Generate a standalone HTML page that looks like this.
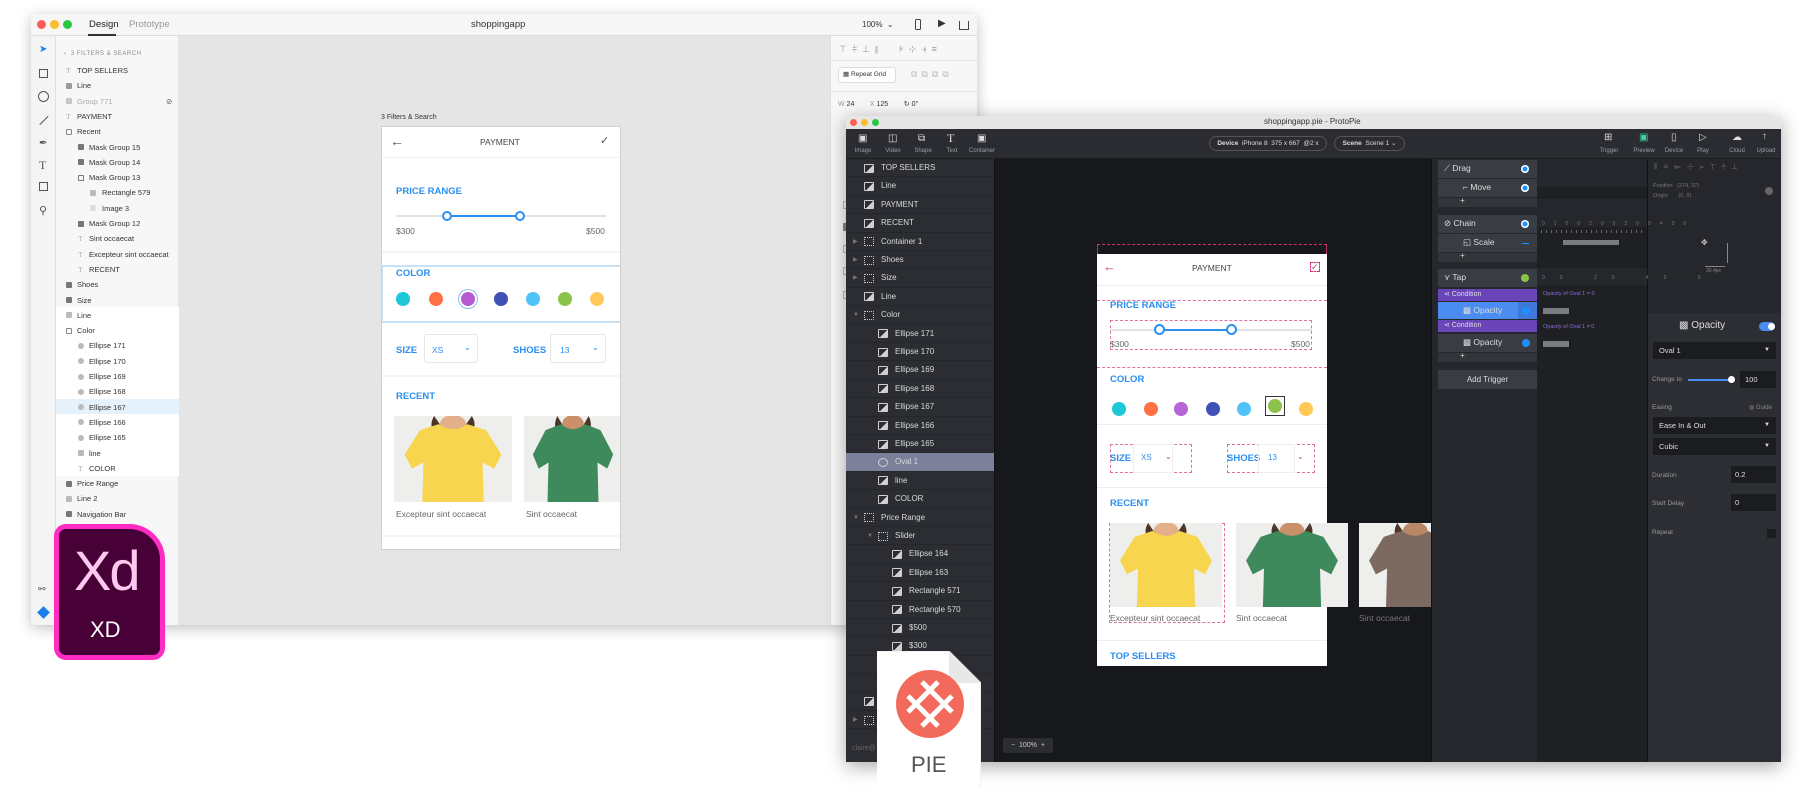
<!DOCTYPE html>
<html><head><meta charset="utf-8"><style>
*{box-sizing:border-box;margin:0;padding:0}
body{width:1812px;height:808px;background:#fff;position:relative;overflow:hidden;font-family:"Liberation Sans",sans-serif}
.a{position:absolute}
.t{position:absolute;white-space:nowrap}
.xl{position:absolute;left:0;width:123px;height:15.3px;font-size:7.5px;color:#333;line-height:15.3px}
.xl i{position:absolute;top:4.5px;width:6px;height:6px;background:#9a9a9a;border-radius:1px}
.pl{position:absolute;left:0;width:148px;height:18.4px;font-size:8px;color:#d8d9dc;line-height:18.4px;border-bottom:1px solid #24262b}
.pl i{position:absolute;top:4.5px;width:10px;height:9px;border:1.3px solid #d0d0d0;border-radius:1px;background:linear-gradient(135deg,transparent 55%,#d0d0d0 55%)}
.ar{position:absolute;top:0;font-size:6px;color:#777}
.h{color:#2a8ff0;font-weight:bold;font-size:9.5px}
.dot{position:absolute;width:14px;height:14px;border-radius:50%}
.ib{position:absolute;font-size:6px;color:#9a9ca3;text-align:center;width:30px}
.row{position:absolute;left:1438px;width:99px;background:#3a3c43;font-size:8.5px;color:#ddd}
</style></head><body>

<!-- XD window -->
<div class="a" style="left:31px;top:14px;width:946px;height:611px;background:#e5e5e5;box-shadow:0 3px 14px rgba(0,0,0,.25);border-radius:4px;overflow:hidden">
 <div class="a" style="left:0;top:0;width:946px;height:22px;background:#f6f6f6;border-bottom:1px solid #ddd"></div>
 <div class="a" style="left:6px;top:6px;width:9px;height:9px;border-radius:50%;background:#fc5f57"></div>
 <div class="a" style="left:19px;top:6px;width:9px;height:9px;border-radius:50%;background:#fdbc2e"></div>
 <div class="a" style="left:32px;top:6px;width:9px;height:9px;border-radius:50%;background:#28c840"></div>
 <div class="t" style="left:58px;top:5px;font-size:9.5px;color:#222">Design</div>
 <div class="a" style="left:57px;top:20px;width:28px;height:2px;background:#333"></div>
 <div class="t" style="left:98px;top:5px;font-size:9.5px;color:#999">Prototype</div>
 <div class="t" style="left:440px;top:5px;font-size:9.5px;color:#333">shoppingapp</div>
 <div class="t" style="left:831px;top:6px;font-size:8px;color:#333">100% &nbsp;⌄</div>
 <div class="a" style="left:884px;top:5px;width:6px;height:11px;border:1.3px solid #444;border-radius:1.5px"></div>
 <div class="t" style="left:907px;top:4px;font-size:10px;color:#333">▶</div>
 <div class="a" style="left:928px;top:7px;width:10px;height:9px;border:1.3px solid #444;border-top:none"></div>
 <!-- left tools -->
 <div class="a" style="left:0;top:22px;width:25px;height:589px;background:#f4f4f4;border-right:1px solid #e0e0e0"></div>
 <div class="t" style="left:8px;top:30px;font-size:10px;color:#1a7fe8">➤</div>
 <div class="a" style="left:8px;top:55px;width:9px;height:9px;border:1.2px solid #555"></div>
 <div class="a" style="left:7px;top:77px;width:11px;height:11px;border:1.2px solid #555;border-radius:50%"></div>
 <div class="a" style="left:7px;top:106px;width:12px;height:1.2px;background:#555;transform:rotate(-45deg)"></div>
 <div class="t" style="left:8px;top:124px;font-size:10px;color:#555">✒</div>
 <div class="t" style="left:8px;top:144px;font-size:12px;color:#555;font-family:'Liberation Serif'">T</div>
 <div class="a" style="left:8px;top:168px;width:9px;height:9px;border:1.2px solid #555"></div>
 <div class="t" style="left:8px;top:190px;font-size:11px;color:#555">⚲</div>
 <div class="t" style="left:7px;top:570px;font-size:9px;color:#555">⚯</div>
 <div class="a" style="left:8px;top:594px;width:9px;height:9px;background:#1a7fe8;transform:rotate(45deg)"></div>
 <!-- layers -->
 <div class="a" style="left:25px;top:22px;width:123px;height:589px;background:#f7f7f7;border-right:1px solid #e3e3e3">
  <div class="t" style="left:8px;top:15px;font-size:6px;color:#888;letter-spacing:.5px">‹ &nbsp;3 FILTERS &amp; SEARCH</div>
  <div class="a" style="left:0;top:271px;width:123px;height:169px;background:#fff"></div>
  <div class="a" style="left:0;top:363px;width:123px;height:15px;background:#e5f1fb"></div>
  <div style="position:absolute;left:0;top:27px">
   <div class="xl" style="top:0"><span style="position:absolute;left:10px;color:#aaa;font-family:'Liberation Serif'">T</span><span style="position:absolute;left:21px">TOP SELLERS</span></div>
   <div class="xl" style="top:15.3px"><i style="left:10px"></i><span style="position:absolute;left:21px">Line</span></div>
   <div class="xl" style="top:30.6px;color:#aaa"><i style="left:10px;background:#c6c6c6"></i><span style="position:absolute;left:21px">Group 771</span><span style="position:absolute;left:110px;color:#555">⊘</span></div>
   <div class="xl" style="top:45.9px"><span style="position:absolute;left:10px;color:#aaa;font-family:'Liberation Serif'">T</span><span style="position:absolute;left:21px">PAYMENT</span></div>
   <div class="xl" style="top:61.2px"><i style="left:10px;background:none;border:1px solid #888"></i><span style="position:absolute;left:21px">Recent</span></div>
   <div class="xl" style="top:76.5px"><i style="left:22px;background:#777"></i><span style="position:absolute;left:33px">Mask Group 15</span></div>
   <div class="xl" style="top:91.8px"><i style="left:22px;background:#777"></i><span style="position:absolute;left:33px">Mask Group 14</span></div>
   <div class="xl" style="top:107.1px"><i style="left:22px;background:none;border:1px solid #777"></i><span style="position:absolute;left:33px">Mask Group 13</span></div>
   <div class="xl" style="top:122.4px"><i style="left:34px;background:#bbb"></i><span style="position:absolute;left:46px">Rectangle 579</span></div>
   <div class="xl" style="top:137.7px"><i style="left:34px;background:#ddd"></i><span style="position:absolute;left:46px">Image 3</span></div>
   <div class="xl" style="top:153px"><i style="left:22px;background:#777"></i><span style="position:absolute;left:33px">Mask Group 12</span></div>
   <div class="xl" style="top:168.3px"><span style="position:absolute;left:22px;color:#aaa;font-family:'Liberation Serif'">T</span><span style="position:absolute;left:33px">Sint occaecat</span></div>
   <div class="xl" style="top:183.6px"><span style="position:absolute;left:22px;color:#aaa;font-family:'Liberation Serif'">T</span><span style="position:absolute;left:33px">Excepteur sint occaecat</span></div>
   <div class="xl" style="top:198.9px"><span style="position:absolute;left:22px;color:#aaa;font-family:'Liberation Serif'">T</span><span style="position:absolute;left:33px">RECENT</span></div>
   <div class="xl" style="top:214.2px"><i style="left:10px;background:#777"></i><span style="position:absolute;left:21px">Shoes</span></div>
   <div class="xl" style="top:229.5px"><i style="left:10px;background:#777"></i><span style="position:absolute;left:21px">Size</span></div>
   <div class="xl" style="top:244.8px"><i style="left:10px;background:#bbb"></i><span style="position:absolute;left:21px">Line</span></div>
   <div class="xl" style="top:260.1px"><i style="left:10px;background:none;border:1px solid #888"></i><span style="position:absolute;left:21px">Color</span></div>
   <div class="xl" style="top:275.4px"><i style="left:22px;border-radius:50%;background:#bbb"></i><span style="position:absolute;left:33px">Ellipse 171</span></div>
   <div class="xl" style="top:290.7px"><i style="left:22px;border-radius:50%;background:#bbb"></i><span style="position:absolute;left:33px">Ellipse 170</span></div>
   <div class="xl" style="top:306px"><i style="left:22px;border-radius:50%;background:#bbb"></i><span style="position:absolute;left:33px">Ellipse 169</span></div>
   <div class="xl" style="top:321.3px"><i style="left:22px;border-radius:50%;background:#bbb"></i><span style="position:absolute;left:33px">Ellipse 168</span></div>
   <div class="xl" style="top:336.6px"><i style="left:22px;border-radius:50%;background:#bbb"></i><span style="position:absolute;left:33px">Ellipse 167</span></div>
   <div class="xl" style="top:351.9px"><i style="left:22px;border-radius:50%;background:#bbb"></i><span style="position:absolute;left:33px">Ellipse 166</span></div>
   <div class="xl" style="top:367.2px"><i style="left:22px;border-radius:50%;background:#bbb"></i><span style="position:absolute;left:33px">Ellipse 165</span></div>
   <div class="xl" style="top:382.5px"><i style="left:22px;background:#bbb"></i><span style="position:absolute;left:33px">line</span></div>
   <div class="xl" style="top:397.8px"><span style="position:absolute;left:22px;color:#aaa;font-family:'Liberation Serif'">T</span><span style="position:absolute;left:33px">COLOR</span></div>
   <div class="xl" style="top:413.1px"><i style="left:10px;background:#777"></i><span style="position:absolute;left:21px">Price Range</span></div>
   <div class="xl" style="top:428.4px"><i style="left:10px;background:#bbb"></i><span style="position:absolute;left:21px">Line 2</span></div>
   <div class="xl" style="top:443.7px"><i style="left:10px;background:#777"></i><span style="position:absolute;left:21px">Navigation Bar</span></div>
  </div>
 </div>
 <!-- right panel -->
 <div class="a" style="left:799px;top:22px;width:147px;height:589px;background:#f7f7f7;border-left:1px solid #e0e0e0">
  <div class="t" style="left:8px;top:8px;font-size:9px;color:#999;letter-spacing:5px">⊤⫩⊥⫴</div>
  <div class="t" style="left:68px;top:8px;font-size:9px;color:#999;letter-spacing:5px">⊧⊹⫣≡</div>
  <div class="a" style="left:0;top:24px;width:147px;height:1px;background:#e3e3e3"></div>
  <div class="a" style="left:7px;top:31px;width:58px;height:16px;background:#fff;border:1px solid #ddd;border-radius:3px;font-size:6.5px;color:#333;line-height:14px;padding-left:4px">▦ Repeat Grid</div>
  <div class="t" style="left:80px;top:33px;font-size:9px;color:#bbb;letter-spacing:4px">⧉⧉⧉⧉</div>
  <div class="a" style="left:0;top:55px;width:147px;height:1px;background:#e3e3e3"></div>
  <div class="t" style="left:7px;top:64px;font-size:7px;color:#333"><span style="color:#999">W</span> 24 &nbsp;&nbsp;&nbsp;&nbsp;&nbsp;&nbsp;&nbsp;<span style="color:#999">X</span> 125 &nbsp;&nbsp;&nbsp;&nbsp;&nbsp;&nbsp;&nbsp;↻ 0°</div>
  <div class="a" style="left:12px;top:165px;width:8px;height:8px;border:1px solid #bbb"></div>
  <div class="a" style="left:12px;top:187px;width:8px;height:8px;background:#888"></div>
  <div class="a" style="left:12px;top:209px;width:8px;height:8px;border:1px solid #bbb"></div>
  <div class="a" style="left:12px;top:231px;width:8px;height:8px;border:1px solid #bbb"></div>
  <div class="a" style="left:12px;top:255px;width:8px;height:8px;border:1px solid #bbb"></div>
 </div>
 <!-- artboard -->
 <div class="t" style="left:350px;top:100px;font-size:7px;color:#333">3 Filters &amp; Search</div>
 <div class="a" style="left:350px;top:112px;width:240px;height:424px;background:#fff;border:1px solid #d0d0d0;overflow:hidden">
  <div class="t" style="left:8px;top:6px;font-size:14px;color:#555">←</div>
  <div class="t" style="left:98px;top:10px;font-size:8.5px;color:#444">PAYMENT</div>
  <div class="t" style="left:218px;top:7px;font-size:11px;color:#555">✓</div>
  <div class="a" style="left:0;top:30px;width:240px;height:1px;background:#f0f0f0"></div>
  <div class="t h" style="left:14px;top:59px">PRICE RANGE</div>
  <div class="a" style="left:14px;top:88px;width:210px;height:2px;background:#dfe3e6"></div>
  <div class="a" style="left:64px;top:88px;width:74px;height:2px;background:#2a8ff0"></div>
  <div class="a" style="left:60px;top:84px;width:10px;height:10px;border:2px solid #2a8ff0;border-radius:50%;background:#fff"></div>
  <div class="a" style="left:133px;top:84px;width:10px;height:10px;border:2px solid #2a8ff0;border-radius:50%;background:#fff"></div>
  <div class="t" style="left:14px;top:99px;font-size:8.5px;color:#666">$300</div>
  <div class="t" style="left:204px;top:99px;font-size:8.5px;color:#666">$500</div>
  <div class="a" style="left:0;top:124px;width:240px;height:2px;background:#f5f5f5"></div>
  <div class="a" style="left:-1px;top:138px;width:241px;height:58px;border:2px solid #c9e1f5"></div>
  <div class="t h" style="left:14px;top:141px">COLOR</div>
  <div class="dot" style="left:14px;top:165px;background:#1ec8d8"></div>
  <div class="dot" style="left:47px;top:165px;background:#ff7043"></div>
  <div class="dot" style="left:79px;top:165px;background:#b55bd0;box-shadow:0 0 0 2px #fff,0 0 0 3px #8db8e8"></div>
  <div class="dot" style="left:112px;top:165px;background:#3f51b5"></div>
  <div class="dot" style="left:144px;top:165px;background:#4fc3f7"></div>
  <div class="dot" style="left:176px;top:165px;background:#8bc34a"></div>
  <div class="dot" style="left:208px;top:165px;background:#ffc857"></div>
  <div class="t h" style="left:14px;top:218px">SIZE</div>
  <div class="a" style="left:42px;top:207px;width:54px;height:29px;border:1px solid #e6e6e6;border-radius:3px"></div>
  <div class="t" style="left:50px;top:218px;font-size:8.5px;color:#2a8ff0">XS</div>
  <div class="t" style="left:82px;top:216px;font-size:8px;color:#2a8ff0">⌄</div>
  <div class="t h" style="left:131px;top:218px">SHOES</div>
  <div class="a" style="left:168px;top:207px;width:56px;height:29px;border:1px solid #e6e6e6;border-radius:3px"></div>
  <div class="t" style="left:178px;top:218px;font-size:8.5px;color:#2a8ff0">13</div>
  <div class="t" style="left:210px;top:216px;font-size:8px;color:#2a8ff0">⌄</div>
  <div class="a" style="left:0;top:248px;width:240px;height:2px;background:#f5f5f5"></div>
  <div class="t h" style="left:14px;top:264px">RECENT</div>
  <svg class="a" style="left:12px;top:289px" width="118" height="86" viewBox="0 0 100 85" preserveAspectRatio="none"><rect width="100" height="85" fill="#eeeeec"/><path d="M34 0 Q30 8 33 14 L40 10Z M66 0 Q70 8 67 14 L60 10Z" fill="#4a3527"/><ellipse cx="50" cy="8" rx="11" ry="9" fill="#e3b08a"/><path d="M24 85 L25 46 L15 52 L9 38 L22 14 L38 8 Q50 18 62 8 L78 14 L91 38 L85 52 L75 46 L76 85Z" fill="#f7d54e"/></svg>
  <svg class="a" style="left:142px;top:289px" width="98" height="86" viewBox="0 0 100 85" preserveAspectRatio="none"><rect width="100" height="85" fill="#eeeeec"/><path d="M34 0 Q30 8 33 14 L40 10Z M66 0 Q70 8 67 14 L60 10Z" fill="#4a3527"/><ellipse cx="50" cy="8" rx="11" ry="9" fill="#c9906a"/><path d="M24 85 L25 46 L15 52 L9 38 L22 14 L38 8 Q50 18 62 8 L78 14 L91 38 L85 52 L75 46 L76 85Z" fill="#3f8a5c"/></svg>
  <div class="t" style="left:14px;top:382px;font-size:8.5px;color:#666">Excepteur sint occaecat</div>
  <div class="t" style="left:144px;top:382px;font-size:8.5px;color:#666">Sint occaecat</div>
  <div class="a" style="left:0;top:408px;width:240px;height:2px;background:#f5f5f5"></div>
  <div class="t h" style="left:14px;top:422px">TOP SELLERS</div>
 </div>
</div>

<!-- XD logo -->
<div class="a" style="left:54px;top:524px;width:111px;height:136px;background:#470137;border:5px solid #ff2bc2;border-radius:12px 36px 12px 12px"></div>
<div class="t" style="left:74px;top:538px;font-size:56px;color:#ffc8ef;letter-spacing:-2px">Xd</div>
<div class="t" style="left:90px;top:617px;font-size:22px;color:#fff">XD</div>

<!-- ProtoPie window -->
<div class="a" style="left:846px;top:116px;width:935px;height:646px;background:#17181c;box-shadow:0 4px 18px rgba(0,0,0,.35);overflow:hidden">
 <div class="a" style="left:0;top:0;width:935px;height:13px;background:#e6e6e6"></div>
 <div class="a" style="left:4px;top:3px;width:7px;height:7px;border-radius:50%;background:#fc5f57"></div>
 <div class="a" style="left:15px;top:3px;width:7px;height:7px;border-radius:50%;background:#fdbc2e"></div>
 <div class="a" style="left:26px;top:3px;width:7px;height:7px;border-radius:50%;background:#28c840"></div>
 <div class="t" style="left:418px;top:1px;font-size:8px;color:#333">shoppingapp.pie - ProtoPie</div>
 <div class="a" style="left:0;top:13px;width:935px;height:30px;background:#2a2c31;border-bottom:1px solid #1a1b1f"></div>
 <div class="t" style="left:12px;top:17px;font-size:10px;color:#ddd">▣</div><div class="ib" style="left:2px;top:32px">Image</div>
 <div class="t" style="left:42px;top:17px;font-size:10px;color:#ddd">◫</div><div class="ib" style="left:32px;top:32px">Video</div>
 <div class="t" style="left:72px;top:17px;font-size:10px;color:#ddd">⧉</div><div class="ib" style="left:62px;top:32px">Shape</div>
 <div class="t" style="left:101px;top:15px;font-size:12px;color:#ddd;font-family:'Liberation Serif'">T</div><div class="ib" style="left:91px;top:32px">Text</div>
 <div class="t" style="left:131px;top:17px;font-size:10px;color:#ddd">▣</div><div class="ib" style="left:121px;top:32px">Container</div>
 <div class="a" style="left:363px;top:20px;width:118px;height:15px;border:1px solid #555;border-radius:8px;font-size:6.5px;color:#ddd;line-height:13px;text-align:center"><b>Device</b>&nbsp; iPhone 8 &nbsp;375 x 667 &nbsp;@2 x</div>
 <div class="a" style="left:488px;top:20px;width:71px;height:15px;border:1px solid #555;border-radius:8px;font-size:6.5px;color:#ddd;line-height:13px;text-align:center"><b>Scene</b>&nbsp; Scene 1 ⌄</div>
 <div class="t" style="left:758px;top:16px;font-size:10px;color:#ddd">⊞</div><div class="ib" style="left:748px;top:32px">Trigger</div>
 <div class="t" style="left:793px;top:16px;font-size:10px;color:#3ed6a0">▣</div><div class="ib" style="left:783px;top:32px">Preview</div>
 <div class="t" style="left:825px;top:16px;font-size:10px;color:#ddd">▯</div><div class="ib" style="left:813px;top:32px">Device</div>
 <div class="t" style="left:853px;top:16px;font-size:10px;color:#ddd">▷</div><div class="ib" style="left:842px;top:32px">Play</div>
 <div class="t" style="left:886px;top:16px;font-size:10px;color:#ddd">☁</div><div class="ib" style="left:876px;top:32px">Cloud</div>
 <div class="t" style="left:916px;top:15px;font-size:10px;color:#ddd">↑</div><div class="ib" style="left:905px;top:32px">Upload</div>
 <!-- left layers -->
 <div class="a" style="left:0;top:43px;width:148px;height:603px;background:#2b2d32">
  <div class="pl" style="top:0"><i style="left:18px"></i><span style="position:absolute;left:35px">TOP SELLERS</span></div>
  <div class="pl" style="top:18.4px"><i style="left:18px"></i><span style="position:absolute;left:35px">Line</span></div>
  <div class="pl" style="top:36.8px"><i style="left:18px"></i><span style="position:absolute;left:35px">PAYMENT</span></div>
  <div class="pl" style="top:55.2px"><i style="left:18px"></i><span style="position:absolute;left:35px">RECENT</span></div>
  <div class="pl" style="top:73.6px"><span class="ar" style="left:7px">▶</span><i style="left:18px;background:none;border-style:dotted"></i><span style="position:absolute;left:35px">Container 1</span></div>
  <div class="pl" style="top:92px"><span class="ar" style="left:7px">▶</span><i style="left:18px;background:none;border-style:dotted"></i><span style="position:absolute;left:35px">Shoes</span></div>
  <div class="pl" style="top:110.4px"><span class="ar" style="left:7px">▶</span><i style="left:18px;background:none;border-style:dotted"></i><span style="position:absolute;left:35px">Size</span></div>
  <div class="pl" style="top:128.8px"><i style="left:18px"></i><span style="position:absolute;left:35px">Line</span></div>
  <div class="pl" style="top:147.2px"><span class="ar" style="left:7px">▼</span><i style="left:18px;background:none;border-style:dotted"></i><span style="position:absolute;left:35px">Color</span></div>
  <div class="pl" style="top:165.6px"><i style="left:32px"></i><span style="position:absolute;left:49px">Ellipse 171</span></div>
  <div class="pl" style="top:184px"><i style="left:32px"></i><span style="position:absolute;left:49px">Ellipse 170</span></div>
  <div class="pl" style="top:202.4px"><i style="left:32px"></i><span style="position:absolute;left:49px">Ellipse 169</span></div>
  <div class="pl" style="top:220.8px"><i style="left:32px"></i><span style="position:absolute;left:49px">Ellipse 168</span></div>
  <div class="pl" style="top:239.2px"><i style="left:32px"></i><span style="position:absolute;left:49px">Ellipse 167</span></div>
  <div class="pl" style="top:257.6px"><i style="left:32px"></i><span style="position:absolute;left:49px">Ellipse 166</span></div>
  <div class="pl" style="top:276px"><i style="left:32px"></i><span style="position:absolute;left:49px">Ellipse 165</span></div>
  <div class="pl" style="top:294.4px;background:#7c809a"><i style="left:32px;border-radius:50%;background:none"></i><span style="position:absolute;left:49px">Oval 1</span></div>
  <div class="pl" style="top:312.8px"><i style="left:32px"></i><span style="position:absolute;left:49px">line</span></div>
  <div class="pl" style="top:331.2px"><i style="left:32px"></i><span style="position:absolute;left:49px">COLOR</span></div>
  <div class="pl" style="top:349.6px"><span class="ar" style="left:7px">▼</span><i style="left:18px;background:none;border-style:dotted"></i><span style="position:absolute;left:35px">Price Range</span></div>
  <div class="pl" style="top:368px"><span class="ar" style="left:21px">▼</span><i style="left:32px;background:none;border-style:dotted"></i><span style="position:absolute;left:49px">Slider</span></div>
  <div class="pl" style="top:386.4px"><i style="left:46px"></i><span style="position:absolute;left:63px">Ellipse 164</span></div>
  <div class="pl" style="top:404.8px"><i style="left:46px"></i><span style="position:absolute;left:63px">Ellipse 163</span></div>
  <div class="pl" style="top:423.2px"><i style="left:46px"></i><span style="position:absolute;left:63px">Rectangle 571</span></div>
  <div class="pl" style="top:441.6px"><i style="left:46px"></i><span style="position:absolute;left:63px">Rectangle 570</span></div>
  <div class="pl" style="top:460px"><i style="left:46px"></i><span style="position:absolute;left:63px">$500</span></div>
  <div class="pl" style="top:478.4px"><i style="left:46px"></i><span style="position:absolute;left:63px">$300</span></div>
  <div class="pl" style="top:496.8px"></div>
  <div class="pl" style="top:515.2px"></div>
  <div class="pl" style="top:533.6px"><i style="left:18px"></i></div>
  <div class="pl" style="top:552px"><span class="ar" style="left:7px">▶</span><i style="left:18px;background:none;border-style:dotted"></i></div>
  <div class="t" style="left:6px;top:586px;font-size:7px;color:#666">claire@</div>
 </div>
 <div class="a" style="left:148px;top:43px;width:1px;height:603px;background:#111"></div>
 <!-- zoom ctrl -->
 <div class="a" style="left:157px;top:622px;width:50px;height:15px;background:#2b2d32;border-radius:2px;font-size:7px;color:#ccc;line-height:15px;text-align:center">− &nbsp;100% &nbsp;+</div>
 <!-- phone -->
 <div class="a" style="left:251px;top:128px;width:230px;height:10px;border:1px dashed #d0307a;border-bottom:none"></div>
 <div class="a" style="left:251px;top:138px;width:230px;height:412px;background:#fff;overflow:hidden">
  <div class="t" style="left:6px;top:5px;font-size:13px;color:#c04070">←</div>
  <div class="t" style="left:95px;top:9px;font-size:8.5px;color:#444">PAYMENT</div>
  <div class="a" style="left:213px;top:8px;width:10px;height:10px;border:1px dashed #d0307a;font-size:9px;color:#c04070;line-height:8px">✓</div>
  <div class="a" style="left:0;top:31px;width:230px;height:1px;background:#eee"></div>
  <div class="a" style="left:0;top:46px;width:230px;height:1px;border-top:1px dashed #e070a0"></div>
  <div class="t h" style="left:13px;top:46px">PRICE RANGE</div>
  <div class="a" style="left:13px;top:66px;width:202px;height:30px;border:1px dashed #e070a0"></div>
  <div class="a" style="left:13px;top:75px;width:202px;height:2px;background:#dfe3e6"></div>
  <div class="a" style="left:62px;top:75px;width:72px;height:2px;background:#2a8ff0"></div>
  <div class="a" style="left:57px;top:70px;width:11px;height:11px;border:2px solid #2a8ff0;border-radius:50%;background:#fff"></div>
  <div class="a" style="left:129px;top:70px;width:11px;height:11px;border:2px solid #2a8ff0;border-radius:50%;background:#fff"></div>
  <div class="t" style="left:13px;top:85px;font-size:8.5px;color:#666">$300</div>
  <div class="t" style="left:194px;top:85px;font-size:8.5px;color:#666">$500</div>
  <div class="a" style="left:0;top:113px;width:230px;height:1px;border-top:1px dashed #e070a0"></div>
  <div class="t h" style="left:13px;top:120px">COLOR</div>
  <div class="dot" style="left:15px;top:148px;background:#1ec8d8"></div>
  <div class="dot" style="left:47px;top:148px;background:#ff7043"></div>
  <div class="dot" style="left:77px;top:148px;background:#b565d6"></div>
  <div class="dot" style="left:109px;top:148px;background:#3f51b5"></div>
  <div class="dot" style="left:140px;top:148px;background:#4fc3f7"></div>
  <div class="a" style="left:168px;top:142px;width:20px;height:20px;border:1.5px solid #333"></div>
  <div class="dot" style="left:171px;top:145px;background:#8bc34a"></div>
  <div class="dot" style="left:202px;top:148px;background:#ffc857"></div>
  <div class="a" style="left:0;top:170px;width:230px;height:1px;background:#eee"></div>
  <div class="a" style="left:13px;top:190px;width:82px;height:29px;border:1px dashed #e070a0"></div>
  <div class="t h" style="left:13px;top:199px">SIZE</div>
  <div class="a" style="left:36px;top:190px;width:40px;height:29px;border:1px solid #eee"></div>
  <div class="t" style="left:44px;top:199px;font-size:8px;color:#2a8ff0">XS</div>
  <div class="t" style="left:68px;top:198px;font-size:8px;color:#c04070">⌄</div>
  <div class="a" style="left:130px;top:190px;width:88px;height:29px;border:1px dashed #e070a0"></div>
  <div class="t h" style="left:130px;top:199px">SHOES</div>
  <div class="a" style="left:161px;top:190px;width:37px;height:29px;border:1px solid #eee"></div>
  <div class="t" style="left:171px;top:199px;font-size:8px;color:#2a8ff0">13</div>
  <div class="t" style="left:200px;top:198px;font-size:8px;color:#c04070">⌄</div>
  <div class="a" style="left:0;top:233px;width:230px;height:1px;background:#eee"></div>
  <div class="t h" style="left:13px;top:244px">RECENT</div>
  <div class="a" style="left:12px;top:269px;width:116px;height:100px;border:1px dashed #e070a0"></div>
  <svg class="a" style="left:13px;top:269px" width="112" height="84" viewBox="0 0 100 85" preserveAspectRatio="none"><rect width="100" height="85" fill="#eeeeec"/><path d="M34 0 Q30 8 33 14 L40 10Z M66 0 Q70 8 67 14 L60 10Z" fill="#4a3527"/><ellipse cx="50" cy="8" rx="11" ry="9" fill="#e3b08a"/><path d="M24 85 L25 46 L15 52 L9 38 L22 14 L38 8 Q50 18 62 8 L78 14 L91 38 L85 52 L75 46 L76 85Z" fill="#f7d54e"/></svg>
  <div class="t" style="left:13px;top:359px;font-size:8.5px;color:#666">Excepteur sint occaecat</div>
  <div class="t" style="left:139px;top:359px;font-size:8.5px;color:#666">Sint occaecat</div>
  <div class="a" style="left:0;top:386px;width:230px;height:1px;background:#eee"></div>
  <div class="t h" style="left:13px;top:397px">TOP SELLERS</div>
 </div>
 <svg class="a" style="left:390px;top:407px" width="112" height="84" viewBox="0 0 100 85" preserveAspectRatio="none"><rect width="100" height="85" fill="#eeeeec"/><path d="M34 0 Q30 8 33 14 L40 10Z M66 0 Q70 8 67 14 L60 10Z" fill="#4a3527"/><ellipse cx="50" cy="8" rx="11" ry="9" fill="#c9906a"/><path d="M24 85 L25 46 L15 52 L9 38 L22 14 L38 8 Q50 18 62 8 L78 14 L91 38 L85 52 L75 46 L76 85Z" fill="#3f8a5c"/></svg>
 <svg class="a" style="left:513px;top:407px" width="72" height="84" viewBox="0 0 64 85" preserveAspectRatio="none"><rect width="64" height="85" fill="#eeeeec"/><path d="M34 0 Q30 8 33 14 L40 10Z" fill="#4a3527"/><ellipse cx="50" cy="8" rx="11" ry="9" fill="#b78766"/><path d="M24 85 L25 46 L15 52 L9 38 L22 14 L38 8 Q50 18 62 8 L64 10 L64 85Z" fill="#7c6a60"/></svg>
 <div class="t" style="left:513px;top:497px;font-size:8.5px;color:#777">Sint occaecat</div>
 <!-- interaction panel -->
 <div class="a" style="left:585px;top:43px;width:107px;height:603px;background:#25272c;border-left:1px solid #111"></div>
 <div class="a" style="left:691px;top:43px;width:110px;height:603px;background:#1f2024"></div>
 <div class="a" style="left:691px;top:43px;width:110px;height:28px;background:#25272c"></div>
 <div class="a" style="left:691px;top:83px;width:110px;height:28px;background:#25272c"></div>
 <div class="a" style="left:691px;top:152px;width:110px;height:17px;background:#25272c"></div>
 <div class="a" style="left:801px;top:43px;width:134px;height:154px;background:#25272c;border-left:1px solid #111"></div>
 <div class="a" style="left:801px;top:197px;width:134px;height:449px;background:#2c2e33;border-left:1px solid #111"></div>
</div>
<!-- interaction rows -->
<div class="row" style="top:160px;height:18px"><span class="t" style="left:6px;top:3px">⟋ Drag</span><div class="dot" style="left:83px;top:5px;width:8px;height:8px;background:#1e90ff;box-shadow:0 0 0 1.5px #fff inset"></div></div>
<div class="row" style="top:179px;height:18px"><span class="t" style="left:25px;top:3px">⌐ Move</span><div class="dot" style="left:83px;top:5px;width:8px;height:8px;background:#1e90ff;box-shadow:0 0 0 1.5px #fff inset"></div></div>
<div class="row" style="top:198px;height:9px;background:#33353b"><span class="t" style="left:22px;top:-2px;font-size:8px">+</span></div>
<div class="row" style="top:215px;height:18px"><span class="t" style="left:6px;top:3px">⊘ Chain</span><div class="dot" style="left:83px;top:5px;width:8px;height:8px;background:#1e90ff;box-shadow:0 0 0 1.5px #fff inset"></div></div>
<div class="row" style="top:234px;height:18px"><span class="t" style="left:25px;top:3px">◱ Scale</span><div class="a" style="left:84px;top:9px;width:7px;height:1px;background:#1e90ff"></div></div>
<div class="row" style="top:253px;height:9px;background:#33353b"><span class="t" style="left:22px;top:-2px;font-size:8px">+</span></div>
<div class="row" style="top:269px;height:18px"><span class="t" style="left:6px;top:3px">⋎ Tap</span><div class="dot" style="left:83px;top:5px;width:8px;height:8px;background:#8bc34a"></div></div>
<div class="row" style="top:289px;height:12px;background:#6a45b8;font-size:7px"><span class="t" style="left:6px;top:1px">⋖ Condition</span></div>
<div class="row" style="top:302px;height:17px;background:#4a8cf0"><span class="t" style="left:25px;top:3px">▩ Opacity</span><div class="a" style="left:80px;top:0;width:19px;height:17px;background:#3f78d8"></div><div class="dot" style="left:84px;top:5px;width:8px;height:8px;background:#1e90ff"></div></div>
<div class="row" style="top:320px;height:12px;background:#6a45b8;font-size:7px"><span class="t" style="left:6px;top:1px">⋖ Condition</span></div>
<div class="row" style="top:334px;height:18px"><span class="t" style="left:25px;top:3px">▩ Opacity</span><div class="dot" style="left:84px;top:5px;width:8px;height:8px;background:#1e90ff"></div></div>
<div class="row" style="top:353px;height:9px;background:#33353b"><span class="t" style="left:22px;top:-2px;font-size:8px">+</span></div>
<div class="row" style="top:370px;height:19px;text-align:center;line-height:19px;font-size:8px">Add Trigger</div>
<!-- timeline -->
<div class="t" style="left:1542px;top:221px;font-size:5px;color:#777;letter-spacing:9px">0100200300400</div>
<div class="a" style="left:1541px;top:230px;width:104px;height:3px;background:repeating-linear-gradient(90deg,#666 0 1px,transparent 1px 5px)"></div>
<div class="a" style="left:1563px;top:240px;width:56px;height:5px;background:#7a7c82"></div>
<div class="t" style="left:1542px;top:275px;font-size:5px;color:#777;letter-spacing:15px">00.20.40.6</div>
<div class="t" style="left:1543px;top:291px;font-size:5.5px;color:#8a6ad8">Opacity of Oval 1 = 0</div>
<div class="a" style="left:1543px;top:308px;width:26px;height:6px;background:#7a7c82"></div>
<div class="t" style="left:1543px;top:324px;font-size:5.5px;color:#8a6ad8">Opacity of Oval 1 ≠ 0</div>
<div class="a" style="left:1543px;top:341px;width:26px;height:6px;background:#7a7c82"></div>
<!-- properties -->
<div class="t" style="left:1654px;top:162px;font-size:8px;color:#666;letter-spacing:6px">⫴≡⊫⊹⊧⊤⫩⊥</div>
<div class="t" style="left:1653px;top:183px;font-size:5.5px;color:#777">Position &nbsp;&nbsp;(274, 37)</div>
<div class="t" style="left:1653px;top:193px;font-size:5.5px;color:#777">Origin &nbsp;&nbsp;&nbsp;&nbsp;&nbsp;&nbsp;(0, 0)</div>
<div class="a" style="left:1765px;top:187px;width:8px;height:8px;border-radius:50%;background:#666"></div>
<div class="t" style="left:1701px;top:238px;font-size:8px;color:#ccc">✥</div>
<div class="a" style="left:1727px;top:243px;width:1px;height:20px;background:#888"></div>
<div class="a" style="left:1705px;top:266px;width:20px;height:1px;background:#888"></div>
<div class="t" style="left:1706px;top:268px;font-size:5px;color:#888">30.4px</div>
<div class="t" style="left:1679px;top:320px;font-size:10px;color:#ddd">▩ Opacity</div>
<div class="a" style="left:1759px;top:322px;width:16px;height:9px;border-radius:5px;background:#4a8cf0"></div>
<div class="a" style="left:1768px;top:323px;width:7px;height:7px;border-radius:50%;background:#fff"></div>
<div class="a" style="left:1653px;top:342px;width:123px;height:17px;background:#1b1c20;font-size:7.5px;color:#ddd;line-height:17px;padding-left:6px">Oval 1<span style="position:absolute;right:6px;font-size:6px">▼</span></div>
<div class="t" style="left:1652px;top:376px;font-size:6.5px;color:#999">Change to</div>
<div class="a" style="left:1688px;top:379px;width:44px;height:2px;background:#4a8cf0"></div>
<div class="a" style="left:1728px;top:376px;width:7px;height:7px;border-radius:50%;background:#fff"></div>
<div class="a" style="left:1740px;top:371px;width:36px;height:17px;background:#1b1c20;font-size:7.5px;color:#ddd;line-height:17px;padding-left:5px">100</div>
<div class="t" style="left:1652px;top:404px;font-size:6.5px;color:#999">Easing</div>
<div class="t" style="left:1749px;top:404px;font-size:6px;color:#888">◍ Guide</div>
<div class="a" style="left:1653px;top:417px;width:123px;height:17px;background:#1b1c20;font-size:7.5px;color:#ddd;line-height:17px;padding-left:6px">Ease In &amp; Out<span style="position:absolute;right:6px;font-size:6px">▼</span></div>
<div class="a" style="left:1653px;top:438px;width:123px;height:17px;background:#1b1c20;font-size:7.5px;color:#ddd;line-height:17px;padding-left:6px">Cubic<span style="position:absolute;right:6px;font-size:6px">▼</span></div>
<div class="t" style="left:1652px;top:472px;font-size:6.5px;color:#999">Duration</div>
<div class="a" style="left:1731px;top:466px;width:45px;height:17px;background:#1b1c20;font-size:7.5px;color:#ddd;line-height:17px;padding-left:4px">0.2</div>
<div class="t" style="left:1652px;top:500px;font-size:6.5px;color:#999">Start Delay</div>
<div class="a" style="left:1731px;top:494px;width:45px;height:17px;background:#1b1c20;font-size:7.5px;color:#ddd;line-height:17px;padding-left:4px">0</div>
<div class="t" style="left:1652px;top:529px;font-size:6.5px;color:#999">Repeat</div>
<div class="a" style="left:1767px;top:529px;width:9px;height:9px;background:#1b1c20"></div>

<!-- PIE file icon -->
<svg class="a" style="left:877px;top:651px" width="104" height="137" viewBox="0 0 104 137"><path d="M0 0 H72 L104 32 V137 H0Z" fill="#fff"/><path d="M72 0 V32 H104" fill="#e8e8e8"/><path d="M0 0 H72 L104 32 V137" fill="none" stroke="#e6e6e6"/>
<g transform="translate(53,53)"><circle r="34" fill="#f26a5b"/><g stroke="#fff" stroke-width="5" fill="none"><path d="M-22 -8 L8 22 M-8 -22 L22 8 M-22 8 L8 -22 M-8 22 L22 -8"/></g></g></svg>
<div class="t" style="left:911px;top:752px;font-size:22px;color:#555">PIE</div>
</body></html>
